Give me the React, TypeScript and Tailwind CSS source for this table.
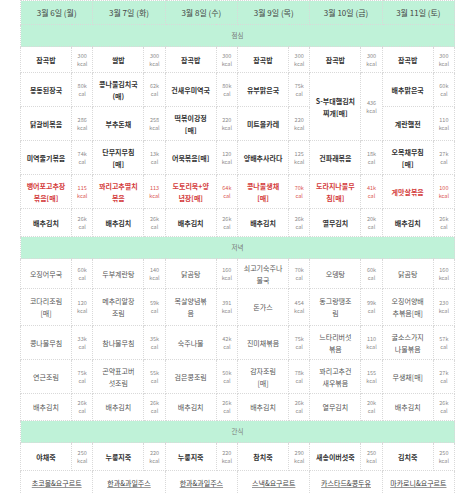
import { Fragment } from 'react';

type Cell = { name: string; kcal?: string; red?: boolean; rowSpan?: number } | null;

type Row = { h: string; cells: Cell[] };

const k = (v: number) => (v >= 100 ? `${v}\nkcal` : `${v}k\ncal`);

const days = ['3월 6일 (월)', '3월 7일 (화)', '3월 8일 (수)', '3월 9일 (목)', '3월 10일 (금)', '3월 11일 (토)'];

const lunch: Row[] = [
    {
        h: 'h-[26px]',
        cells: [
            { name: '잡곡밥', kcal: k(300) },
            { name: '쌀밥', kcal: k(300) },
            { name: '잡곡밥', kcal: k(300) },
            { name: '잡곡밥', kcal: k(300) },
            { name: '잡곡밥', kcal: k(300) },
            { name: '잡곡밥', kcal: k(300) },
        ],
    },
    {
        h: 'h-[34px]',
        cells: [
            { name: '봉동된장국', kcal: k(80) },
            { name: '콩나물김치국\n(매)', kcal: k(62) },
            { name: '건새우미역국', kcal: k(80) },
            { name: '유부맑은국', kcal: k(75) },
            { name: 'S-부대햄김치\n찌개[매]', kcal: k(436), rowSpan: 2 },
            { name: '배추맑은국', kcal: k(60) },
        ],
    },
    {
        h: 'h-[34px]',
        cells: [
            { name: '닭갈비볶음', kcal: k(286) },
            { name: '부추돈채', kcal: k(258) },
            { name: '떡볶이강정\n[매]', kcal: k(220) },
            { name: '미트볼카레', kcal: k(220) },
            null,
            { name: '계란햄전', kcal: k(110) },
        ],
    },
    {
        h: 'h-[34px]',
        cells: [
            { name: '미역줄기볶음', kcal: k(74) },
            { name: '단무지무침\n[매]', kcal: k(13) },
            { name: '어묵볶음[매]', kcal: k(120) },
            { name: '양배추사라다', kcal: k(125) },
            { name: '건파래볶음', kcal: k(18) },
            { name: '오복채무침\n[매]', kcal: k(27) },
        ],
    },
    {
        h: 'h-[34px]',
        cells: [
            { name: '뱅어포고추장\n볶음[매]', kcal: k(115), red: true },
            { name: '꽈리고추멸치\n볶음', kcal: k(113), red: true },
            { name: '도토리묵+양\n념장[매]', kcal: k(64), red: true },
            { name: '콩나물생채\n[매]', kcal: k(70), red: true },
            { name: '도라지나물무\n침[매]', kcal: k(41), red: true },
            { name: '게맛살볶음', kcal: k(100), red: true },
        ],
    },
    {
        h: 'h-[28px]',
        cells: [
            { name: '배추김치', kcal: k(26) },
            { name: '배추김치', kcal: k(26) },
            { name: '배추김치', kcal: k(26) },
            { name: '배추김치', kcal: k(26) },
            { name: '열무김치', kcal: k(20) },
            { name: '배추김치', kcal: k(26) },
        ],
    },
];

const dinner: Row[] = [
    {
        h: 'h-[30px]',
        cells: [
            { name: '오징어무국', kcal: k(60) },
            { name: '두부계란탕', kcal: k(140) },
            { name: '닭곰탕', kcal: k(160) },
            { name: '쇠고기숙주나\n물국', kcal: k(70) },
            { name: '오뎅탕', kcal: k(60) },
            { name: '닭곰탕', kcal: k(160) },
        ],
    },
    {
        h: 'h-[37px]',
        cells: [
            { name: '코다리조림\n[매]', kcal: k(120) },
            { name: '메추리알장\n조림', kcal: k(59) },
            { name: '목살양념볶\n음', kcal: k(391) },
            { name: '돈가스', kcal: k(454) },
            { name: '동그랑땡조\n림', kcal: k(99) },
            { name: '오징어양배\n추볶음[매]', kcal: k(230) },
        ],
    },
    {
        h: 'h-[34px]',
        cells: [
            { name: '콩나물무침', kcal: k(33) },
            { name: '참나물무침', kcal: k(35) },
            { name: '숙주나물', kcal: k(42) },
            { name: '진미채볶음', kcal: k(75) },
            { name: '느타리버섯\n볶음', kcal: k(110) },
            { name: '굴소스가지\n나물볶음', kcal: k(57) },
        ],
    },
    {
        h: 'h-[34px]',
        cells: [
            { name: '연근조림', kcal: k(75) },
            { name: '곤약표고버\n섯조림', kcal: k(55) },
            { name: '검은콩조림', kcal: k(50) },
            { name: '감자조림\n[매]', kcal: k(78) },
            { name: '꽈리고추건\n새우볶음', kcal: k(155) },
            { name: '무생채[매]', kcal: k(27) },
        ],
    },
    {
        h: 'h-[27px]',
        cells: [
            { name: '배추김치', kcal: k(26) },
            { name: '배추김치', kcal: k(26) },
            { name: '배추김치', kcal: k(26) },
            { name: '배추김치', kcal: k(26) },
            { name: '열무김치', kcal: k(20) },
            { name: '배추김치', kcal: k(26) },
        ],
    },
];

const snackMain: Row = {
    h: 'h-[28px]',
    cells: [
        { name: '야채죽', kcal: k(250) },
        { name: '누룽지죽', kcal: k(220) },
        { name: '누룽지죽', kcal: k(220) },
        { name: '참치죽', kcal: k(290) },
        { name: '새송이버섯죽', kcal: k(250) },
        { name: '김치죽', kcal: k(250) },
    ],
};

const snackSide = ['초코볼&요구르트', '한과&과일주스', '한과&과일주스', '스낵&요구르트', '카스타드&콩두유', '마카로니&요구르트'];

const border = 'border border-dotted border-[#d9d9d9]';

function Section({ label }: { label: string }) {
    return (
        <tr className="h-[22px] bg-[#bff2d8]">
            <td colSpan={12} className={`${border} text-center text-[6.5px] text-[#7a7a7a]`}>
                {label}
            </td>
        </tr>
    );
}

function MealRows({ rows, bold }: { rows: Row[]; bold?: boolean }) {
    return (
        <>
            {rows.map((row, i) => (
                <tr key={i} className={row.h}>
                    {row.cells.map((c, j) =>
                        c ? (
                            <Fragment key={j}>
                                <td
                                    rowSpan={c.rowSpan}
                                    className={`${border} px-[2px] py-0 text-center align-middle text-[7px] leading-[12px] whitespace-pre-line ${
                                        c.red ? 'text-[#d43c3c]' : bold ? 'text-[#333]' : 'text-[#555]'
                                    } ${bold ? 'font-semibold' : 'font-normal'}`}
                                >
                                    {c.name}
                                </td>
                                <td
                                    rowSpan={c.rowSpan}
                                    className={`${border} px-0 py-0 text-center align-middle text-[5.5px] leading-[8px] whitespace-pre-line ${
                                        c.red ? 'text-[#d9534f]' : 'text-[#8a8a8a]'
                                    }`}
                                >
                                    {c.kcal}
                                </td>
                            </Fragment>
                        ) : null
                    )}
                </tr>
            ))}
        </>
    );
}

export default function App() {
    return (
        <div className="w-[474px] h-[493px] overflow-hidden bg-white font-['Noto_Sans_CJK_KR','Noto_Sans',sans-serif]">
            <table className="ml-[20px] w-[434px] table-fixed border-collapse">
                <colgroup>
                    {days.map((d) => (
                        <Fragment key={d}>
                            <col className="w-[51px]" />
                            <col className="w-[21.33px]" />
                        </Fragment>
                    ))}
                </colgroup>
                <thead>
                    <tr className="h-[24px] bg-[#bff2d8]">
                        {days.map((d) => (
                            <th key={d} colSpan={2} className={`${border} text-center text-[8px] font-normal text-[#444]`}>
                                {d}
                            </th>
                        ))}
                    </tr>
                </thead>
                <tbody>
                    <Section label="점심" />
                    <MealRows rows={lunch} bold />
                    <Section label="저녁" />
                    <MealRows rows={dinner} />
                    <Section label="간식" />
                    <MealRows rows={[snackMain]} bold />
                    <tr className="h-[26px]">
                        {snackSide.map((s, i) => (
                            <td
                                key={i}
                                colSpan={2}
                                className={`${border} text-center align-middle text-[7px] text-[#444] underline decoration-[#999]`}
                            >
                                {s}
                            </td>
                        ))}
                    </tr>
                </tbody>
            </table>
        </div>
    );
}
